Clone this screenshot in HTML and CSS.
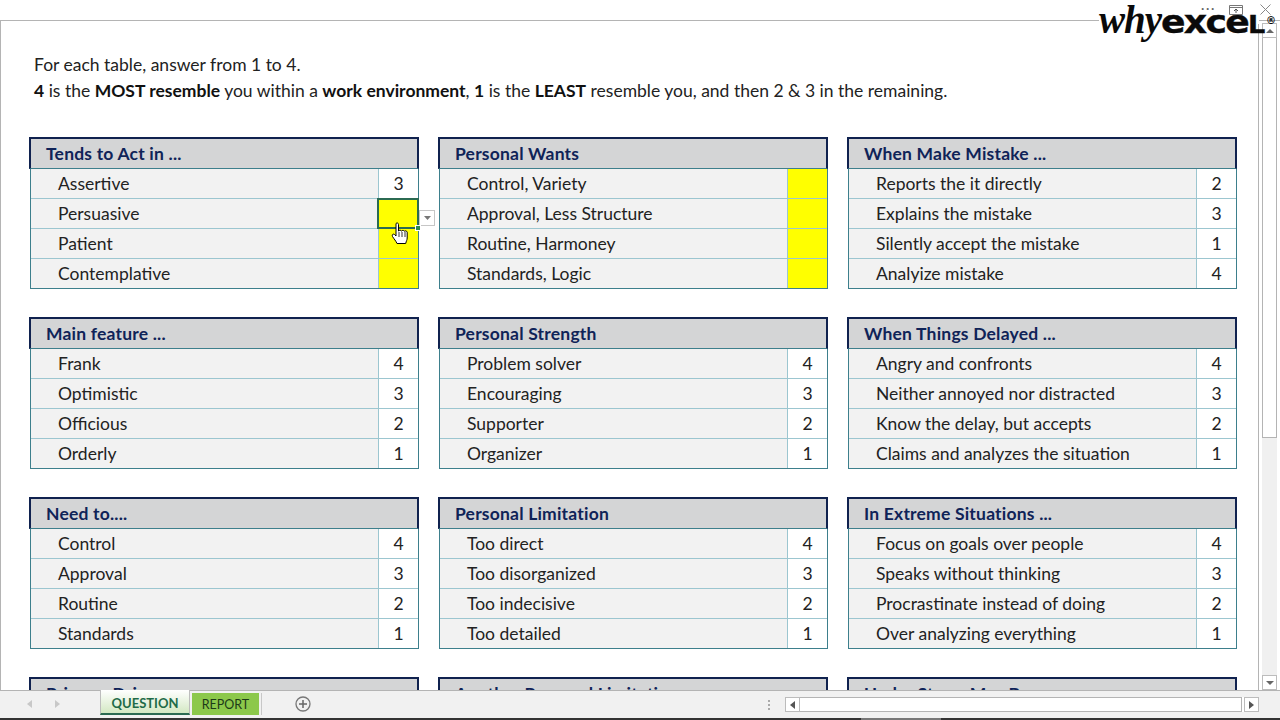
FILE: index.html
```html
<!DOCTYPE html>
<html lang="en">
<head>
<meta charset="utf-8">
<title>Personality test</title>
<link rel="stylesheet" href="styles.css">
</head>
<body>
<div class="app">
  <header class="topbar">
    <div class="logo"><span class="logo-why">why</span><span class="logo-excel">exce<span class="logo-l">L</span></span><span class="logo-reg">®</span></div>
    <div class="dots">···</div>
    <svg class="win-restore" width="14" height="10" viewBox="0 0 14 10"><path d="M.5 .5h13v9H.5zM.5 2.500h13" fill="none" stroke="#777"/><path d="M7 8V4M5 6l2-2 2 2" fill="none" stroke="#555"/></svg>
    <svg class="win-close" width="11" height="11" viewBox="0 0 11 11"><path d="M.5 .5l10 10M10.500 .5l-10 10" stroke="#888" fill="none"/></svg>
  </header>
  <main class="workspace">
    <section class="sheet">
      <div class="intro">
        <p>For each table, answer from 1 to 4.</p>
        <p><b>4</b> is the <b>MOST resemble</b> you within a <b>work environment</b>, <b>1</b> is the <b>LEAST</b> resemble you, and then 2 &amp; 3 in the remaining.</p>
      </div>
      <div class="tables">
        <div class="card">
          <div class="card-title">Tends to Act in ...</div>
          <div class="row"><span class="label">Assertive</span><span class="val">3</span></div>
          <div class="row"><span class="label">Persuasive</span><span class="val empty selected">
            <i class="handle"></i><i class="drop"><svg width="7" height="4" viewBox="0 0 7 4"><path d="M0 0h7L3.500 4z" fill="#777"/></svg></i>
            <svg class="hand" width="18" height="23" viewBox="0 0 18 23"><path d="M5 1.500c1-1 2.500-.5 2.500 1V9c.5-1 2.500-1 3 0 .5-.8 2.300-.8 2.800.2.700-.6 2.700-.4 2.900 1V16c0 2-1 3-1.500 5.500H6C5 19 3 17 1.500 14.500c-1-2 1-3 2-2L5 14z" fill="#fff" stroke="#000" stroke-width="1"/><path d="M8 10v5M11 10v5M14 10v5" stroke="#000" stroke-width=".8" fill="none"/></svg>
          </span></div>
          <div class="row"><span class="label">Patient</span><span class="val empty"></span></div>
          <div class="row"><span class="label">Contemplative</span><span class="val empty"></span></div>
        </div>
        <div class="card">
          <div class="card-title">Personal Wants</div>
          <div class="row"><span class="label">Control, Variety</span><span class="val empty"></span></div>
          <div class="row"><span class="label">Approval, Less Structure</span><span class="val empty"></span></div>
          <div class="row"><span class="label">Routine, Harmoney</span><span class="val empty"></span></div>
          <div class="row"><span class="label">Standards, Logic</span><span class="val empty"></span></div>
        </div>
        <div class="card">
          <div class="card-title">When Make Mistake ...</div>
          <div class="row"><span class="label">Reports the it directly</span><span class="val">2</span></div>
          <div class="row"><span class="label">Explains the mistake</span><span class="val">3</span></div>
          <div class="row"><span class="label">Silently accept the mistake</span><span class="val">1</span></div>
          <div class="row"><span class="label">Analyize mistake</span><span class="val">4</span></div>
        </div>
        <div class="card">
          <div class="card-title">Main feature ...</div>
          <div class="row"><span class="label">Frank</span><span class="val">4</span></div>
          <div class="row"><span class="label">Optimistic</span><span class="val">3</span></div>
          <div class="row"><span class="label">Officious</span><span class="val">2</span></div>
          <div class="row"><span class="label">Orderly</span><span class="val">1</span></div>
        </div>
        <div class="card">
          <div class="card-title">Personal Strength</div>
          <div class="row"><span class="label">Problem solver</span><span class="val">4</span></div>
          <div class="row"><span class="label">Encouraging</span><span class="val">3</span></div>
          <div class="row"><span class="label">Supporter</span><span class="val">2</span></div>
          <div class="row"><span class="label">Organizer</span><span class="val">1</span></div>
        </div>
        <div class="card">
          <div class="card-title">When Things Delayed ...</div>
          <div class="row"><span class="label">Angry and confronts</span><span class="val">4</span></div>
          <div class="row"><span class="label">Neither annoyed nor distracted</span><span class="val">3</span></div>
          <div class="row"><span class="label">Know the delay, but accepts</span><span class="val">2</span></div>
          <div class="row"><span class="label">Claims and analyzes the situation</span><span class="val">1</span></div>
        </div>
        <div class="card">
          <div class="card-title">Need to....</div>
          <div class="row"><span class="label">Control</span><span class="val">4</span></div>
          <div class="row"><span class="label">Approval</span><span class="val">3</span></div>
          <div class="row"><span class="label">Routine</span><span class="val">2</span></div>
          <div class="row"><span class="label">Standards</span><span class="val">1</span></div>
        </div>
        <div class="card">
          <div class="card-title">Personal Limitation</div>
          <div class="row"><span class="label">Too direct</span><span class="val">4</span></div>
          <div class="row"><span class="label">Too disorganized</span><span class="val">3</span></div>
          <div class="row"><span class="label">Too indecisive</span><span class="val">2</span></div>
          <div class="row"><span class="label">Too detailed</span><span class="val">1</span></div>
        </div>
        <div class="card">
          <div class="card-title">In Extreme Situations ...</div>
          <div class="row"><span class="label">Focus on goals over people</span><span class="val">4</span></div>
          <div class="row"><span class="label">Speaks without thinking</span><span class="val">3</span></div>
          <div class="row"><span class="label">Procrastinate instead of doing</span><span class="val">2</span></div>
          <div class="row"><span class="label">Over analyzing everything</span><span class="val">1</span></div>
        </div>
        <div class="card"><div class="card-title">Primary Drive</div></div>
        <div class="card"><div class="card-title">Another Personal Limitation</div></div>
        <div class="card"><div class="card-title">Under Stress May Be</div></div>
      </div>
    </section>
    <aside class="vscroll">
      <div class="vbtn"><svg width="8" height="4" viewBox="0 0 8 4"><path d="M0 4h8L4 0z" fill="#666"/></svg></div>
      <div class="vthumb"></div>
      <div class="vtrack"></div>
      <div class="vbtn"><svg width="8" height="4" viewBox="0 0 8 4"><path d="M0 0h8L4 4z" fill="#666"/></svg></div>
    </aside>
  </main>
  <footer class="tabbar">
    <div class="nav">
      <svg width="5" height="8" viewBox="0 0 5 8"><path d="M5 0v8L0 4z" fill="#c8c8c8"/></svg>
      <svg width="5" height="8" viewBox="0 0 5 8"><path d="M0 0v8l5-4z" fill="#c8c8c8"/></svg>
    </div>
    <div class="tab tab-active">QUESTION</div>
    <div class="tab tab-report">REPORT</div>
    <svg class="add" width="16" height="16" viewBox="0 0 16 16"><circle cx="8" cy="8" r="7" fill="none" stroke="#777" stroke-width="1.300"/><path d="M8 4v8M4 8h8" stroke="#666" stroke-width="1.500"/></svg>
    <div class="grip"><i></i><i></i><i></i></div>
    <div class="hscroll">
      <div class="hbtn"><svg width="5" height="8" viewBox="0 0 5 8"><path d="M5 0v8L0 4z" fill="#555"/></svg></div>
      <div class="hthumb"></div>
      <div class="hbtn"><svg width="5" height="8" viewBox="0 0 5 8"><path d="M0 0v8l5-4z" fill="#555"/></svg></div>
    </div>
  </footer>
  <div class="strip"><i></i></div>
</div>
</body>
</html>
```
FILE: styles.css
```css
* { box-sizing: border-box; }
html, body { margin: 0; padding: 0; height: 100%; overflow: hidden; }
body { font-family: "Lato", "Open Sans", sans-serif; font-size: 17.5px; color: #1c1c1c; background: #fff; }
p { margin: 0; }
i { display: block; }

.app { width: 1280px; height: 720px; display: flex; flex-direction: column; position: relative; }

.topbar { height: 21px; flex: none; border-bottom: 1px solid #b4b4b4; position: relative; background: #fff; }
.logo { position: absolute; left: 1099px; top: 0; height: 40px; display: flex; align-items: baseline; color: #0a0a0a; line-height: 40px; isolation: isolate; z-index: 3; }
.logo::before { content: ""; position: absolute; left: 0; top: 16px; width: 160px; height: 8px; background: #fff; z-index: -1; }
.logo-why { font-family: "Liberation Serif", serif; font-weight: 700; font-style: italic; font-size: 39px; letter-spacing: -1px; }
.logo-excel { font-family: "DejaVu Sans", sans-serif; font-weight: 700; font-size: 32px; letter-spacing: -1.500px; transform: scaleX(1.13); transform-origin: left bottom; width: 105px; white-space: nowrap; -webkit-text-stroke: .4px #0a0a0a; }
.logo-l { font-size: 24px; }
.logo-reg { font-family: "DejaVu Sans", sans-serif; font-size: 10px; position: relative; top: -9px; left: 0; font-weight: 700; }
.dots { position: absolute; left: 1201px; top: 2px; font: 700 12px/14px "Liberation Sans", sans-serif; color: #666; letter-spacing: 1px; }
.win-restore { position: absolute; left: 1229px; top: 5px; z-index: 4; }
.win-close { position: absolute; left: 1260px; top: 4px; z-index: 4; }

.workspace { flex: none; height: 669px; display: flex; }
.sheet { width: 1259px; flex: none; overflow: hidden; border-left: 1px solid #b4b4b4; border-right: 1px solid #b4b4b4; padding: 31px 0 0 29px; background: #fff; }
.intro { margin-left: 4px; line-height: 26px; height: 86px; color: #222; }
.intro b { font-weight: 700; color: #111; }

.tables { display: grid; grid-template-columns: repeat(3, 389px); column-gap: 20px; row-gap: 29px; }
.card { border: 1px solid #3d7f8c; border-top: 0; height: 151px; }
.card-title { height: 32px; margin: -1px -1px 0 -2px; padding-left: 15px; background: #d4d5d6; border: 2px solid #10224f; border-bottom: 1px solid #3d7f8c; font-weight: 700; color: #0f2358; line-height: 29px; letter-spacing: .2px; }
.row { height: 30px; display: flex; background: #f2f2f2; border-bottom: 1px solid #9cc6d0; }
.row:last-child { border-bottom: 0; height: 29px; }
.label { flex: 1; padding-left: 27px; line-height: 29px; color: #222; }
.val { width: 40px; flex: none; background: #fff; border-left: 1px solid #9cc6d0; text-align: center; line-height: 29px; position: relative; color: #222; }
.val.empty { background: #ffff00; }
.selected::before { content: ""; position: absolute; left: -2px; top: -1px; right: -1px; bottom: -1px; border: 2px solid #2b6a52; }
.handle { position: absolute; right: -3px; bottom: -3px; width: 6px; height: 6px; background: #2d8a4d; border: 1px solid #fff; z-index: 1; }
.drop { position: absolute; left: 40px; top: 11px; width: 16px; height: 16px; background: #fff; border: 1px solid #c6c6c6; display: flex; align-items: center; justify-content: center; }
.hand { position: absolute; left: 12px; top: 23px; z-index: 2; }

.vscroll { width: 21px; flex: none; padding-left: 3px; padding-right: 3px; display: flex; flex-direction: column; margin-top: 2px; background: #fff; }
.vbtn { height: 15px; flex: none; border: 1px solid #bcbcbc; background: #fff; display: flex; align-items: center; justify-content: center; }
.vthumb { height: 400px; flex: none; border: 1px solid #b4b4b4; border-top: 0; background: #fff; }
.vtrack { flex: 1; background: #f0f0f0; }

.tabbar { height: 28px; flex: none; background: #f1f1f1; border-top: 1px solid #b4b4b4; display: flex; align-items: flex-start; position: relative; }
.nav { width: 100px; flex: none; display: flex; gap: 23px; padding: 9px 0 0 27px; }
.tab { text-align: center; }
.tab-active { width: 90px; height: 25px; font-size: 13px; line-height: 26px; margin-top: -1px; font-weight: 700; color: #1f6b48; border: 1px solid #bdbdbd; border-top: 0; border-bottom: 2px solid #2b6a52; background: linear-gradient(#fff, #d3e8c3); }
.tab-report { width: 67px; height: 22px; font-size: 12.5px; line-height: 23px; margin: 2px 0 0 2px; background: #8cc84b; color: #1d3a18; box-shadow: 2px 0 0 #f1f1f1, 3px 0 0 #c8c8c8; }
.add { margin: 5px 0 0 36px; flex: none; }
.grip { margin: 9px 0 0 457px; flex: none; width: 2px; display: flex; flex-direction: column; gap: 2px; }
.grip i { width: 2px; height: 2px; background: #aaa; }
.hscroll { position: absolute; left: 785px; top: 6px; width: 474px; height: 15px; display: flex; background: #fff; }
.hbtn { width: 15px; flex: none; border: 1px solid #bcbcbc; display: flex; align-items: center; justify-content: center; background: #fff; }
.hthumb { flex: 1; border: 1px solid #b4b4b4; border-left: 0; margin-right: 2px; background: #fff; }

.strip { height: 2px; flex: none; background: #333; position: relative; }
.strip i { position: absolute; left: 861px; top: 0; width: 80px; height: 2px; background: #777; }
```
